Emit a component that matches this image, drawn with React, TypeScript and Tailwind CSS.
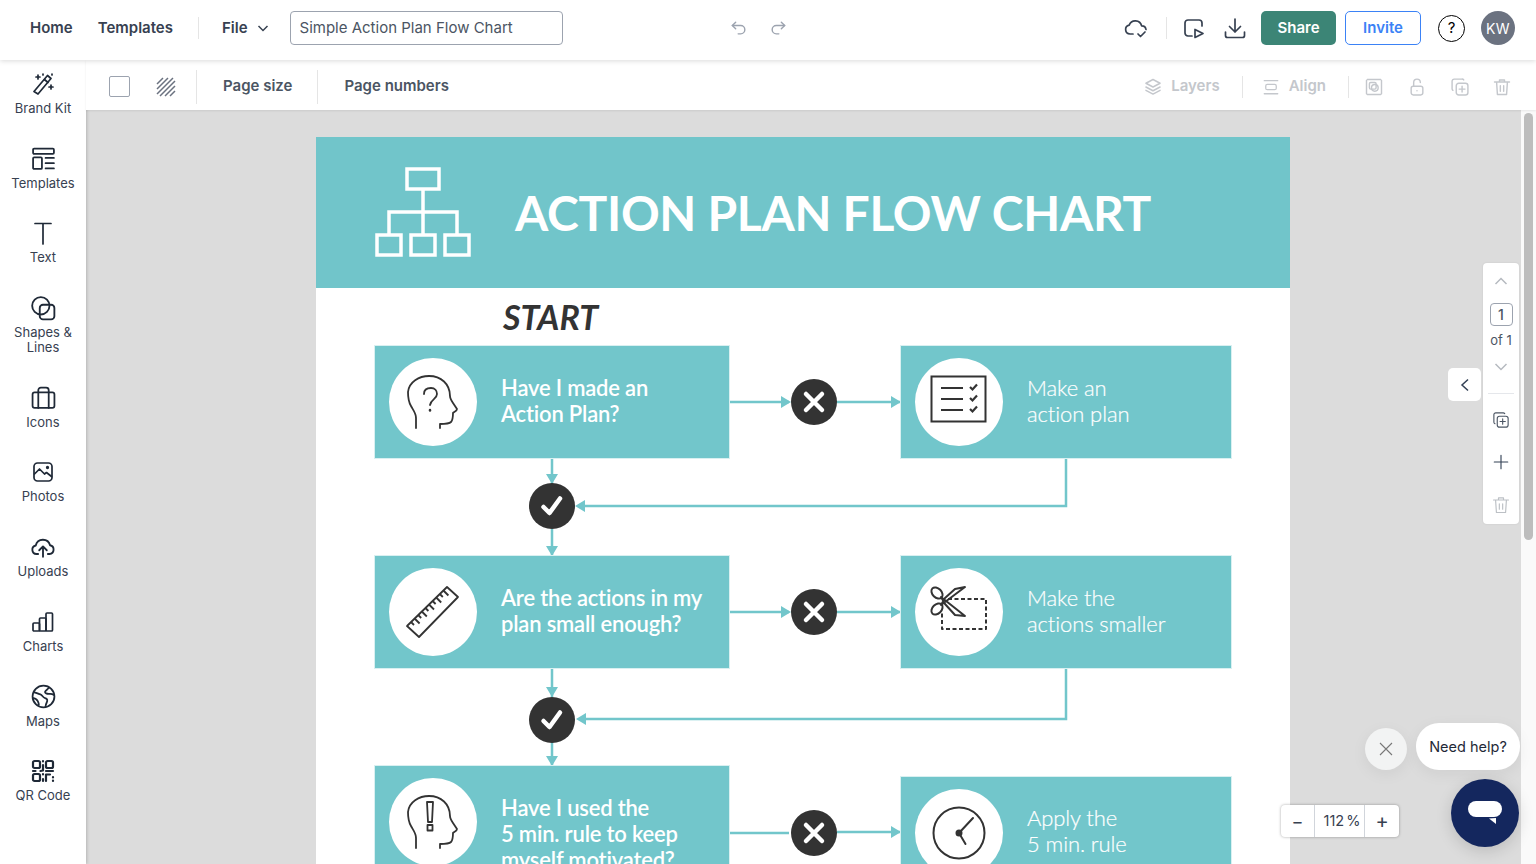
import React from "react";

type SP = { className?: string; children?: React.ReactNode; sw?: number; size?: number };
const I = ({ className = "", children, sw = 1.7, size = 24 }: SP) => (
  <svg width={size} height={size} viewBox="0 0 24 24" fill="none" stroke="currentColor" strokeWidth={sw} strokeLinecap="round" strokeLinejoin="round" className={className}>
    {children}
  </svg>
);

const sideItems: { label: React.ReactNode; icon: React.ReactNode; h: string }[] = [
  { label: "Brand Kit", h: "h-[74.7px]", icon: <I><path d="M3 19.500 16.500 3.500l3.500 3L7 22z" /><path d="m13.500 7.500 3.500 3" /><path d="M7 3v4M5 5h4M20 13v4M18 15h4M12 2v1M21 2v1" /></I> },
  { label: "Templates", h: "h-[74.7px]", icon: <I size={25}><rect x="2" y="2.500" width="20" height="5" rx="1" /><rect x="2" y="11" width="8.500" height="11" rx="1" /><path d="M14 11.500h8M14 16.500h8M14 21.500h8" /></I> },
  { label: "Text", h: "h-[74.7px]", icon: <I><path d="M4 2.500h16M12 2.500V23" /></I> },
  { label: <>Shapes &<br />Lines</>, h: "h-[89.7px]", icon: <I size={26}><circle cx="10" cy="10" r="8" /><rect x="9" y="9" width="13.500" height="13.500" rx="3" /></I> },
  { label: "Icons", h: "h-[74.7px]", icon: <I size={25}><rect x="1.500" y="7" width="21" height="15" rx="2" /><path d="M7 22V5a2.500 2.500 0 0 1 2.500-2.500h5A2.500 2.500 0 0 1 17 5v17" /></I> },
  { label: "Photos", h: "h-[74.7px]", icon: <I><rect x="3" y="3" width="18" height="18" rx="3.500" /><path d="m3.500 14 5-5 5 5 2-1.500 5 4" /><circle cx="16.500" cy="7.500" r=".8" /></I> },
  { label: "Uploads", h: "h-[74.7px]", icon: <I size={26}><path d="M7.500 18.500H6a4 4 0 0 1-.7-7.900 6.800 6.800 0 0 1 13.200-.2 4.100 4.100 0 0 1-.5 8.100h-1.500" /><path d="M12 21v-9M8.500 15l3.500-3.500 3.500 3.500" /></I> },
  { label: "Charts", h: "h-[74.7px]", icon: <I><rect x="2" y="13" width="6.500" height="8" rx="1" /><rect x="8.500" y="8" width="6.500" height="13" rx="1" /><rect x="15" y="3" width="6.500" height="18" rx="1" /></I> },
  { label: "Maps", h: "h-[74.7px]", icon: <I size={25}><circle cx="12" cy="12" r="10.500" /><path d="M3 8c3 .5 4 1.500 6 2s2 3 4.500 3.500 2.500 2.500 1.500 4.500-1 2.500-1 3.500" /><path d="M17 3.500c-1 2-3 2.500-3.500 4s2 2 3.500 2 3-.5 5 1" /><path d="M2 13.500c2 0 3.500 1 4.500 3s1 2 1 3.500" /></I> },
  { label: "QR Code", h: "h-[74.7px]", icon: <I sw={2.200}><rect x="2" y="2" width="7" height="7" rx="1.500" /><rect x="15" y="2" width="7" height="7" rx="1.500" /><rect x="2" y="15" width="7" height="7" rx="1.500" /><path d="M12 2v.5M12 6v5.500L9.500 12M2 12h2.500M15 12h7M12 15v.5M12 20v2M15 22v-6.500h4M22 18v.5M22 21.500v.5" /></I> },
];

const Divider = ({ className = "" }: { className?: string }) => <div className={`w-px bg-[#e5e5e5] ${className}`} />;

const Header = () => (
  <header className="relative z-20 flex h-[60px] shrink-0 items-center bg-white pb-[4px] pl-[30px] pr-[21px] text-[#374151] shadow-[0_1px_5px_rgba(0,0,0,0.15)]">
    <span className="text-[15px] font-semibold">Home</span>
    <span className="ml-[25px] text-[15px] font-semibold">Templates</span>
    <Divider className="ml-[25px] h-[22px]" />
    <span className="ml-[23px] text-[15px] font-semibold">File</span>
    <svg width="12" height="12" viewBox="0 0 12 12" fill="none" stroke="currentColor" strokeWidth="1.5" className="ml-[9px]"><path d="m1.500 4 4.500 4.500L10.500 4" /></svg>
    <div className="ml-[21px] flex h-[34px] w-[273px] items-center rounded-[4px] border border-[#9ca3af] pl-[9px] text-[15px] text-[#4b5563]">Simple Action Plan Flow Chart</div>
    <div className="ml-[166px] flex items-center gap-[19px] text-[#9ca3af]">
      <I size={20}><path d="M8 5 4 9l4 4" /><path d="M4 9h10a5 5 0 0 1 0 10h-3" /></I>
      <I size={20}><path d="m16 5 4 4-4 4" /><path d="M20 9H10a5 5 0 0 0 0 10h3" /></I>
    </div>
    <div className="ml-auto flex items-center text-[#374151]">
      <I size={24}><path d="M10 18H7a4.500 4.500 0 0 1-.8-8.900A6.500 6.500 0 0 1 18.600 9.800 4.300 4.300 0 0 1 23 13.500" /><path d="m15 18 2.500 2.500L22 16" /></I>
      <Divider className="ml-[19px] h-[22px]" />
      <I size={24} className="ml-[15px]"><path d="M10 20H6a3 3 0 0 1-3-3V7a3 3 0 0 1 3-3h11a3 3 0 0 1 3 3v3" /><path d="M13 13.500v8l8-4z" /></I>
      <I size={24} className="ml-[17px]"><path d="M12 3v13M6.500 10.500 12 16l5.500-5.500" /><path d="M2.500 16v3.500a2 2 0 0 0 2 2h15a2 2 0 0 0 2-2V16" /></I>
      <div className="ml-[14px] flex h-[34px] w-[75px] items-center justify-center rounded-[5px] bg-[#3c8576] text-[15px] font-semibold text-white">Share</div>
      <div className="ml-[9px] flex h-[34px] w-[76px] items-center justify-center rounded-[5px] border border-[#3b82f6] text-[15px] font-semibold text-[#3b82f6]">Invite</div>
      <div className="ml-[17px] flex h-[27px] w-[27px] items-center justify-center rounded-full border-[1.500px] border-black text-[15px] text-black">?</div>
      <div className="ml-[16px] flex h-[34px] w-[34px] items-center justify-center rounded-full bg-[#6b7280] text-[14px] tracking-[0.5px] text-white">KW</div>
    </div>
  </header>
);

const Sidebar = () => (
  <aside className="relative z-10 flex w-[86px] shrink-0 flex-col items-center bg-white pt-[12px] shadow-[1px_0_3px_rgba(0,0,0,0.18)]">
    {sideItems.map((it, i) => (
      <div key={i} className={`flex w-full flex-col items-center ${it.h} text-[#1f2937]`}>
        <div className="flex h-[24px] items-center justify-center">{it.icon}</div>
        <div className="mt-[5px] text-center text-[13px] leading-[15px] text-[#374151]">{it.label}</div>
      </div>
    ))}
  </aside>
);

const Toolbar = () => (
  <div className="relative z-10 flex h-[50px] shrink-0 items-center bg-white pl-[23px] pr-[24px] pt-[3px] shadow-[0_1px_2px_rgba(0,0,0,0.08)]">
    <div className="h-[21px] w-[21px] rounded-[2px] border border-[#9ca3af]" />
    <svg width="20" height="20" viewBox="0 0 20 20" stroke="#6b7280" strokeWidth="1.500" className="ml-[26px]"><path d="M1 7 7 1M1 12 12 1M1 17 17 1M4 19 19 4M9 19 19 9M14 19l5-5" /></svg>
    <Divider className="ml-[20px] h-[34px]" />
    <span className="ml-[26px] text-[15px] font-semibold text-[#4b5563]">Page size</span>
    <Divider className="ml-[25px] h-[34px]" />
    <span className="ml-[26px] text-[15px] font-semibold text-[#4b5563]">Page numbers</span>
    <div className="ml-auto flex items-center text-[#c4c7cc]">
      <I size={20}><path d="m12 3 8.500 4.500L12 12 3.500 7.500z" /><path d="m3.500 12 8.500 4.500 8.500-4.500M3.500 16 12 20.500 20.500 16" /></I>
      <span className="ml-[8px] text-[15px] font-semibold">Layers</span>
      <Divider className="ml-[22px] h-[22px]" />
      <I size={18} className="ml-[19px]"><path d="M3 3.500h18M3 21h18" /><rect x="5" y="8.500" width="14" height="7" rx="2" /></I>
      <span className="ml-[9px] text-[15px] font-semibold">Align</span>
      <Divider className="ml-[22px] h-[22px]" />
      <I size={20} className="ml-[15px]"><path d="M4 3h16M4 21h16M3 4v16M21 4v16" /><rect x="6.500" y="6.500" width="8" height="8" rx="1.500" /><circle cx="13" cy="13" r="4" /></I>
      <I size={20} className="ml-[23px]"><rect x="5" y="11" width="14" height="10.500" rx="2.500" /><path d="M8 11V6.500a4 4 0 0 1 8 0" /><path d="M12 16.500v.1" /></I>
      <I size={20} className="ml-[23px]"><rect x="7.500" y="7.500" width="14" height="14" rx="3" /><path d="M16.500 3.500A2.500 2.500 0 0 0 14 2.500H5A2.500 2.500 0 0 0 2.500 5v9a2.500 2.500 0 0 0 1 2" /><path d="M14.500 11v7M11 14.500h7" /></I>
      <I size={20} className="ml-[22px]"><path d="M3 6h18M9 6V3.500h6V6M5.500 6l1 15h11l1-15M10 10.500v6.500M14 10.500v6.500" /></I>
    </div>
  </div>
);

const S = "#333333";
const Head = ({ children }: { children: React.ReactNode }) => (
  <svg width="88" height="88" viewBox="0 0 88 88" fill="none" stroke={S} strokeWidth="1.800" strokeLinejoin="round" strokeLinecap="round">
    <path d="M27 70V60c0-5-3-8-5-12-3-5-3-10-3-14 1-10 11-16 21-16 12 0 21 8 21 20 0 2 1 4 3 7l4 6c0 2-3 3-4 4 0 3 0 7-2 9s-6 2-11 2v4" />
    {children}
  </svg>
);
const ticks = Array.from({ length: 10 }, (_, i) => i);
const icons = {
  question: <Head><path d="M35 36c0-4 3-6 7-6s6 3 6 6c0 5-6 5-7 11" /><path d="M41 52v.5" strokeWidth="2.500" /></Head>,
  list: (
    <svg width="88" height="88" viewBox="0 0 88 88" fill="none" stroke={S} strokeWidth="2">
      <rect x="16.500" y="18.500" width="54" height="45" />
      <path d="M26 30h22M26 41h22M26 52h22" />
      <path d="m55 29 2.500 2.500 4.500-5M55 40l2.500 2.500 4.500-5M55 51l2.500 2.500 4.500-5" strokeWidth="2.200" />
    </svg>
  ),
  ruler: (
    <svg width="88" height="88" viewBox="0 0 88 88" fill="none" stroke={S} strokeWidth="1.800" strokeLinejoin="round">
      <path d="M18 58 58 19l11 10-39 40z" />
      {ticks.map((i) => {
        const x = 22 + i * 3.600;
        const y = 54 - i * 3.500;
        const l = i % 2 === 0 ? 3 : 5;
        return <path key={i} d={`M${x} ${y}l${l} ${l}`} />;
      })}
    </svg>
  ),
  scissors: (
    <svg width="88" height="88" viewBox="0 0 88 88" fill="none" stroke={S} strokeWidth="2" strokeLinejoin="round">
      <path d="M33 31h38v30H27V45" strokeDasharray="4 2.500" />
      <ellipse cx="22" cy="25" rx="4.500" ry="6.500" transform="rotate(-45 22 25)" />
      <ellipse cx="22" cy="41" rx="4.500" ry="6.500" transform="rotate(45 22 41)" />
      <path d="M26 29 50 48 40 47 30 36zM26 37 50 19 40 21 30 30z" />
    </svg>
  ),
  alert: <Head><path d="M38 24h6l-1 20h-4z" /><rect x="38.500" y="47" width="5" height="5.500" /></Head>,
  clock: (
    <svg width="88" height="88" viewBox="0 0 88 88" fill="none" stroke={S} strokeWidth="2" strokeLinecap="round">
      <circle cx="44" cy="44" r="25.500" />
      <path d="M44 44 58 29M44 44l6.500 11" />
      <circle cx="44" cy="44" r="2.500" fill={S} />
    </svg>
  ),
};

const Box = ({ className, icon, children, text }: { className: string; icon: React.ReactNode; children: React.ReactNode; text: string }) => (
  <div className={`absolute flex items-center border border-[#d9f0f1] bg-[#72c6cb] pl-[14px] ${className}`}>
    <div className="mb-auto mt-[12px] h-[88px] w-[88px] shrink-0 rounded-full bg-white">{icon}</div>
    <div className={`ml-[24px] whitespace-nowrap font-['Lato'] text-[22px] leading-[26px] text-white ${text}`}>{children}</div>
  </div>
);

const Badge = ({ type, className }: { type: "x" | "check"; className: string }) => (
  <div className={`absolute flex h-[46px] w-[46px] items-center justify-center rounded-full bg-[#333333] ${className}`}>
    <svg width="26" height="26" viewBox="0 0 26 26" fill="none" stroke="white" strokeWidth="4.500" strokeLinecap="round" strokeLinejoin="round">
      {type === "x" ? <path d="m5 5 16 16M21 5 5 21" /> : <path d="m4.500 14 6 6L21 5.500" />}
    </svg>
  </div>
);

const Connectors = () => (
  <svg className="absolute left-0 top-0" width="974" height="780" viewBox="0 0 974 780" fill="none" stroke="#72c6cb" strokeWidth="2.500">
    <path d="M413 265h60M521 265h64M236 321v26M236 392v27M750 321v48H269" />
    <path d="M413 475h60M521 475h64M236 531v29M236 605v24M750 531v51H269" />
    <path d="M413 696h60M521 695h64" />
    <g fill="#72c6cb" stroke="none">
      <path d="m465 259 10 6-10 6zM575 259l10 6-10 6zM465 469l10 6-10 6zM575 469l10 6-10 6zM575 689l10 6-10 6z" />
      <path d="m230 337 6 10 6-10zM230 409l6 10 6-10zM230 550l6 10 6-10zM230 619l6 10 6-10z" />
      <path d="m269 363-10 6 10 6zM270 576l-10 6 10 6z" />
    </g>
  </svg>
);

const Doc = () => (
  <div className="relative ml-[230px] mt-[27px] h-[800px] w-[974px] shrink-0 self-start bg-white">
    <div className="flex h-[151px] items-center bg-[#71c5ca] pl-[59px]">
      <svg width="96" height="92" viewBox="0 0 96 92" fill="none" stroke="white" strokeWidth="3.500">
        <rect x="32" y="2" width="32" height="20" />
        <path d="M48 22v46M14 68V45h68v23" />
        <rect x="2" y="68" width="24" height="20" />
        <rect x="36" y="68" width="24" height="20" />
        <rect x="70" y="68" width="24" height="20" />
      </svg>
      <h1 className="ml-[44px] whitespace-nowrap font-['Lato'] text-[48px] font-bold leading-none tracking-[-0.3px] text-white">ACTION PLAN FLOW CHART</h1>
    </div>
    <div className="absolute left-[187px] top-[160px] font-['Lato'] text-[34px] font-bold italic leading-[40px] text-[#333333]">START</div>
    <Connectors />
    <Box className="left-[58px] top-[208px] h-[114px] w-[356px]" icon={icons.question} text="mb-[3px] font-semibold tracking-[-0.2px]">Have I made an<br />Action Plan?</Box>
    <Box className="left-[584px] top-[208px] h-[114px] w-[332px]" icon={icons.list} text="mb-[3px] font-light tracking-[-0.1px] [-webkit-text-stroke:0.2px_white]">Make an<br />action plan</Box>
    <Box className="left-[58px] top-[418px] h-[114px] w-[356px]" icon={icons.ruler} text="mb-[3px] font-semibold tracking-[-0.2px]">Are the actions in my<br />plan small enough?</Box>
    <Box className="left-[584px] top-[418px] h-[114px] w-[332px]" icon={icons.scissors} text="mb-[3px] font-light tracking-[-0.1px] [-webkit-text-stroke:0.2px_white]">Make the<br />actions smaller</Box>
    <Box className="left-[58px] top-[628px] h-[136px] w-[356px]" icon={icons.alert} text="mt-[1px] font-semibold tracking-[-0.2px]">Have I used the<br />5 min. rule to keep<br />myself motivated?</Box>
    <Box className="left-[584px] top-[639px] h-[113px] w-[332px]" icon={icons.clock} text="mb-[3px] font-light tracking-[-0.1px] [-webkit-text-stroke:0.2px_white]">Apply the<br />5 min. rule</Box>
    <Badge type="x" className="left-[475px] top-[242px]" />
    <Badge type="check" className="left-[213px] top-[346px]" />
    <Badge type="x" className="left-[475px] top-[452px]" />
    <Badge type="check" className="left-[213px] top-[560px]" />
    <Badge type="x" className="left-[475px] top-[673px]" />
  </div>
);

const PagePanel = () => (
  <div className="absolute right-[17px] top-[153px] flex h-[261px] w-[36px] flex-col items-center rounded-[4px] bg-white shadow-[0_0_2px_rgba(0,0,0,0.1)]">
    <svg width="14" height="14" viewBox="0 0 14 14" fill="none" stroke="#b6bac0" strokeWidth="1.500" className="mt-[11px]"><path d="m1.500 10 5.500-5.500 5.500 5.500" /></svg>
    <div className="mt-[15px] flex h-[23px] w-[23px] items-center justify-center rounded-[4px] border border-[#9ca3af] text-[14px] font-medium text-[#4b5563]">1</div>
    <div className="mt-[5px] text-[13px] leading-[18px] text-[#4b5563]">of 1</div>
    <svg width="14" height="14" viewBox="0 0 14 14" fill="none" stroke="#b6bac0" strokeWidth="1.500" className="mt-[11px]"><path d="m1.500 4 5.500 5.500L12.500 4" /></svg>
    <div className="mt-[19px] h-px w-[26px] bg-[#e5e7eb]" />
    <I size={18} sw={1.500} className="mt-[17px] text-[#4b5563]"><rect x="7" y="7" width="14.500" height="14.500" rx="3" /><path d="M17 3.500A2.500 2.500 0 0 0 15 2.500H5A2.500 2.500 0 0 0 2.500 5v10a2.500 2.500 0 0 0 1.500 2" /><path d="M14.250 10.500v7M10.750 14h7" /></I>
    <I size={18} sw={1.500} className="mt-[24px] text-[#334155]"><path d="M12 3v18M3 12h18" /></I>
    <I size={20} sw={1.400} className="mt-[24px] text-[#bcc0c5]"><path d="M3 6h18M9 6V3.500h6V6M5.500 6l1 15h11l1-15M10 10.500v6.500M14 10.500v6.500" /></I>
  </div>
);

const Floats = () => (
  <>
    <PagePanel />
    <div className="absolute right-[55px] top-[258px] flex h-[33px] w-[33px] items-center justify-center rounded-[5px] bg-white">
      <svg width="14" height="14" viewBox="0 0 14 14" fill="none" stroke="#334155" strokeWidth="1.500"><path d="M10 1.500 4 7l6 5.500" /></svg>
    </div>
    <div className="absolute left-[1195px] top-[695px] flex h-[32px] w-[118px] items-center rounded-[4px] bg-white text-[#374151] shadow-[0_0_3px_rgba(0,0,0,0.35)]">
      <div className="flex h-full w-[34px] items-center justify-center border-r border-[#d1d5db] text-[18px]">−</div>
      <div className="flex h-full w-[50px] items-center justify-center border-r border-[#d1d5db] pl-[5px] text-[14.500px]"><span>112</span><span className="ml-[2px]">%</span></div>
      <div className="flex h-full w-[34px] items-center justify-center text-[20px]">+</div>
    </div>
    <div className="absolute left-[1279px] top-[618px] flex h-[42px] w-[42px] items-center justify-center rounded-full bg-[#f2f3f3] shadow-[0_4px_16px_rgba(0,0,0,0.06)]">
      <svg width="14" height="14" viewBox="0 0 14 14" stroke="#777" strokeWidth="1.100"><path d="m1 1 12 12M13 1 1 13" /></svg>
    </div>
    <div className="absolute left-[1330px] top-[613px] flex h-[47px] w-[104px] items-center justify-center rounded-[23px] bg-white text-[14.500px] text-[#1f2937] shadow-[0_4px_16px_rgba(0,0,0,0.06)]">Need help?</div>
    <div className="absolute left-[1365px] top-[669px] flex h-[68px] w-[68px] items-center justify-center rounded-full bg-[#14275e] shadow-[0_4px_16px_rgba(0,0,0,0.15)]">
      <svg width="36" height="30" viewBox="0 0 36 30"><rect x="1" y="3" width="34" height="16" rx="8" fill="white" /><path d="m22 20.500 7-.5v6z" fill="white" /></svg>
    </div>
  </>
);

export default function App() {
  return (
    <div className="flex h-screen w-screen flex-col overflow-hidden bg-white font-['Inter',sans-serif]">
      <Header />
      <div className="flex min-h-0 flex-1">
        <Sidebar />
        <div className="flex min-w-0 flex-1 flex-col">
          <Toolbar />
          <div className="relative flex min-h-0 flex-1 overflow-hidden bg-[#dcdcdc]">
            <div className="flex min-w-0 flex-1 overflow-hidden">
              <Doc />
            </div>
            <div className="w-[15px] shrink-0 bg-[#fafafa] pl-[3px] pt-[3px]">
              <div className="h-[427px] w-[9px] rounded-full bg-[#bdbdbd]" />
            </div>
            <Floats />
          </div>
        </div>
      </div>
    </div>
  );
}
